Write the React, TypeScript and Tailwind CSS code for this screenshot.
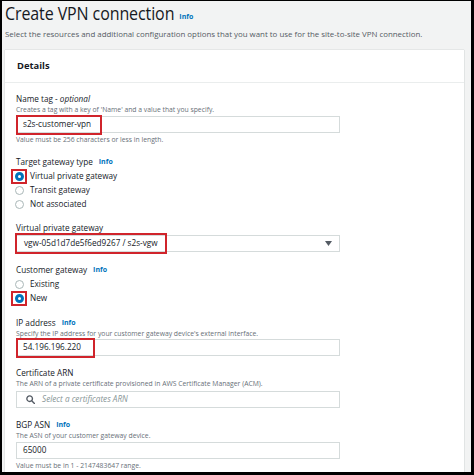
import React from 'react';

const font = { fontFamily: '"Open Sans", "Noto Sans", Arial, sans-serif' };

function Info({ className = '' }: { className?: string }) {
  return <span className={`text-[7px] font-bold text-[#0073bb] ${className}`}>Info</span>;
}

function Radio({ checked, label, marked }: { checked?: boolean; label: string; marked?: boolean }) {
  return (
    <div className="flex h-[14px] items-center">
      <span
        className={`flex h-[15px] w-[16px] items-center justify-center border-2 -ml-[5px] ${
          marked ? 'border-[#d0242b]' : 'border-transparent'
        }`}
      >
        {checked ? (
          <span className="h-[9px] w-[9px] rounded-full border-[3px] border-[#0073bb] bg-white" />
        ) : (
          <span className="h-[9px] w-[9px] rounded-full border border-[#aab7b8] bg-white" />
        )}
      </span>
      <span className="ml-[3px] text-[8.2px] text-[#16191f]">{label}</span>
    </div>
  );
}

function Label({ children, className = '' }: { children: React.ReactNode; className?: string }) {
  return (
    <div className={`flex items-center gap-[6px] text-[8.2px] leading-[12px] text-[#16191f] ${className}`}>
      {children}
    </div>
  );
}

function Desc({ children }: { children: React.ReactNode }) {
  return <div className="text-[6.8px] leading-[10px] text-[#687078]">{children}</div>;
}

function Input({
  value,
  markWidth,
  className = '',
}: {
  value: string;
  markWidth?: string;
  className?: string;
}) {
  return (
    <div className={`relative flex h-[17px] w-[324px] items-center border border-[#d5dbdb] bg-white px-[6px] ${className}`}>
      <span className="text-[8.2px] text-[#16191f]">{value}</span>
      {markWidth && (
        <span className={`absolute -left-[1px] -top-[2px] h-[20px] border-2 border-[#d0242b] ${markWidth}`} />
      )}
    </div>
  );
}

export default function App() {
  return (
    <div className="h-[475px] w-[474px] bg-black pb-[3px] pl-[2px] pr-[3px] pt-[1px]" style={font}>
      <div className="h-full overflow-hidden bg-[#f2f3f3] pl-[3px]">
        <div className="flex items-baseline">
          <h1 className="text-[16px] leading-[24px] tracking-[-0.1px] text-[#16191f] [transform:scaleY(1.12)]">
            Create VPN connection
          </h1>
          <Info className="ml-[5px]" />
        </div>
        <p className="mt-[3px] text-[7.9px] leading-[12px] text-[#545b64]">
          Select the resources and additional configuration options that you want to use for the site-to-site VPN connection.
        </p>

        <div className="mt-[10px] flex">
          <div className="w-[459px] bg-white shadow-[0_0_1px_rgba(0,28,36,0.3)]">
            <div className="flex h-[33px] items-center border-b border-[#eaeded] px-[12px] text-[9.4px] font-bold text-[#16191f]">
              Details
            </div>

            <div className="px-[11px] pt-[10px] pb-[20px]">
              {/* Name tag */}
              <Label>
                <span>
                  Name tag - <i>optional</i>
                </span>
              </Label>
              <Desc>Creates a tag with a key of 'Name' and a value that you specify.</Desc>
              <Input value="s2s-customer-vpn" markWidth="w-[86px]" className="mt-[1px]" />
              <div className="mt-[2px]">
                <Desc>Value must be 256 characters or less in length.</Desc>
              </div>

              {/* Target gateway type */}
              <Label className="mt-[11px]">
                <span>Target gateway type</span>
                <Info />
              </Label>
              <div className="mt-[1px]">
                <Radio checked marked label="Virtual private gateway" />
                <Radio label="Transit gateway" />
                <Radio label="Not associated" />
              </div>

              {/* Virtual private gateway */}
              <Label className="mt-[11px]">
                <span>Virtual private gateway</span>
              </Label>
              <div className="relative mt-[1px] flex h-[17px] w-[324px] items-center justify-between border border-[#d5dbdb] bg-white pl-[7px] pr-[7px]">
                <span className="text-[8.2px] text-[#16191f]">vgw-05d1d7de5f6ed9267 / s2s-vgw</span>
                <svg width="7" height="5" viewBox="0 0 7 5">
                  <path d="M0 0 H7 L3.5 5 Z" fill="#545b64" />
                </svg>
                <span className="absolute -left-[2px] -top-[3px] h-[21px] w-[152px] border-2 border-[#d0242b]" />
              </div>

              {/* Customer gateway */}
              <Label className="mt-[12px]">
                <span>Customer gateway</span>
                <Info />
              </Label>
              <div className="mt-[1px]">
                <Radio label="Existing" />
                <Radio checked marked label="New" />
              </div>

              {/* IP address */}
              <Label className="mt-[12px]">
                <span>IP address</span>
                <Info />
              </Label>
              <Desc>Specify the IP address for your customer gateway device's external interface.</Desc>
              <Input value="54.196.196.220" markWidth="w-[79px]" className="mt-[0px]" />

              {/* Certificate ARN */}
              <Label className="mt-[11px]">
                <span>Certificate ARN</span>
              </Label>
              <Desc>The ARN of a private certificate provisioned in AWS Certificate Manager (ACM).</Desc>
              <div className="mt-[2px] flex h-[17px] w-[324px] items-center border border-[#d5dbdb] bg-white pl-[9px]">
                <svg width="9" height="9" viewBox="0 0 16 16" fill="none" stroke="#545b64" strokeWidth="2.4">
                  <circle cx="6.5" cy="6.5" r="5" />
                  <path d="M10.2 10.2 L15 15" strokeLinecap="round" />
                </svg>
                <span className="ml-[7px] text-[8.2px] italic text-[#879596]">Select a certificates ARN</span>
              </div>

              {/* BGP ASN */}
              <Label className="mt-[11px]">
                <span>BGP ASN</span>
                <Info />
              </Label>
              <Desc>The ASN of your customer gateway device.</Desc>
              <Input value="65000" className="mt-[1px]" />
              <div className="mt-[2px]">
                <Desc>Value must be in 1 - 2147483647 range.</Desc>
              </div>
            </div>
          </div>
          <div className="w-[7px] border-l border-[#e1e4e4]" />
        </div>
      </div>
    </div>
  );
}
